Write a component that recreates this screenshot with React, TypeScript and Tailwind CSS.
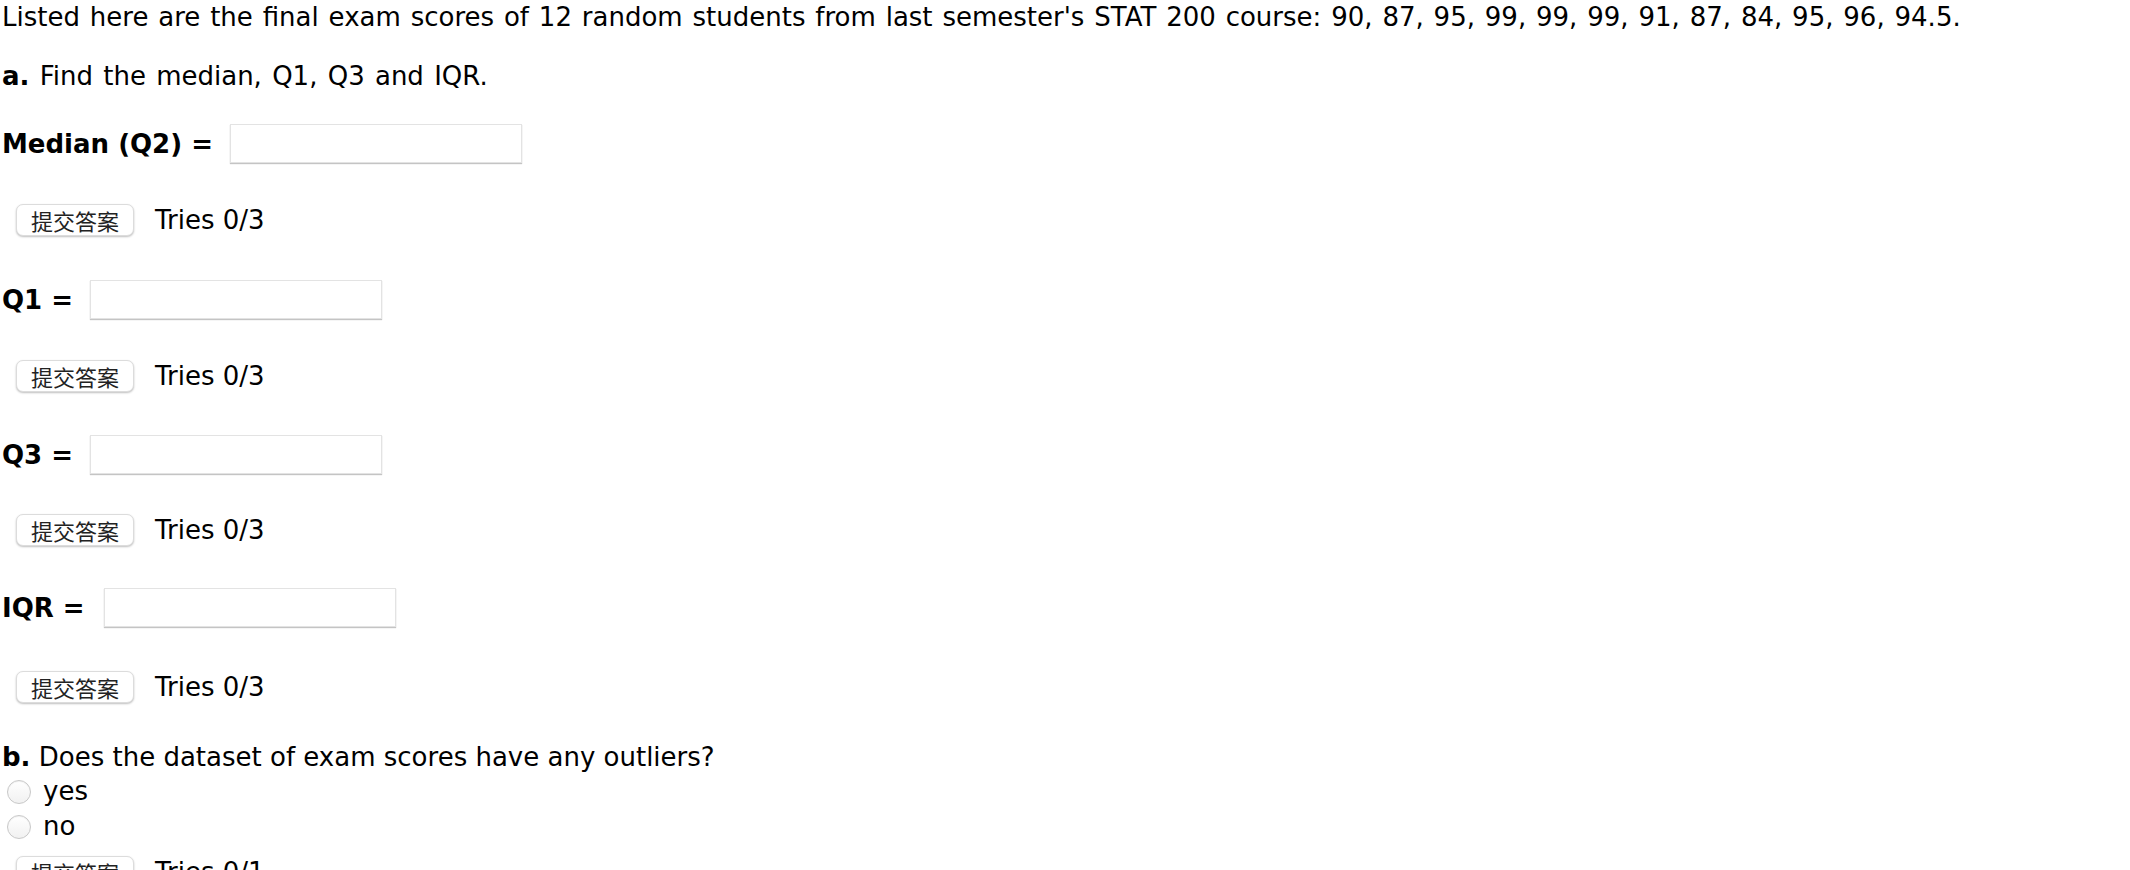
import React from 'react';

const inputCls =
  'h-[39px] w-[292px] border border-[#e3e3e3] bg-white shadow-[0_1px_1px_#c4c4c4] outline-none';

function SubmitRow({ tries }: { tries: string }) {
  return (
    <div className="flex items-center h-[32px]">
      <button className="ml-[14px] h-[32px] w-[118px] rounded-[7px] border border-[#dcdcdc] bg-white shadow-[0_1px_2px_rgba(0,0,0,0.25)] text-[22px] leading-none text-[#222] font-['Noto_Sans_CJK_SC',sans-serif]">
        提交答案
      </button>
      <span className="ml-[21px] leading-[30px]">{tries}</span>
    </div>
  );
}

function AnswerRow({ label, gap }: { label: string; gap: string }) {
  return (
    <div className="flex items-center h-[39px]">
      <span className="font-bold leading-[30px]">{label}</span>
      <input type="text" className={`${gap} ${inputCls}`} />
    </div>
  );
}

function Radio({ label }: { label: string }) {
  return (
    <label className="flex items-center h-[35px]">
      <span className="ml-[5px] h-[24px] w-[24px] rounded-full border border-[#c8c8c8] bg-gradient-to-b from-white to-[#f1f1f1] shadow-[inset_0_1px_1px_rgba(0,0,0,0.06)]" />
      <span className="ml-[12px] leading-[35px]">{label}</span>
    </label>
  );
}

export default function App() {
  return (
    <div className="min-h-screen bg-white pl-[2px] text-[26px] text-black font-['DejaVu_Sans','Noto_Sans_CJK_SC',sans-serif]">
      <p className="pt-[2px] leading-[30px] [word-spacing:1.6px]">
        Listed here are the final exam scores of 12 random students from last semester's STAT 200 course: 90, 87, 95, 99, 99, 99, 91, 87, 84, 95, 96, 94.5.
      </p>
      <p className="mt-[29px] leading-[30px] [word-spacing:2px]">
        <b>a.</b> Find the median, Q1, Q3 and IQR.
      </p>

      <div className="mt-[33px]">
        <AnswerRow label="Median (Q2) =" gap="ml-[17px]" />
      </div>
      <div className="mt-[41px]">
        <SubmitRow tries="Tries 0/3" />
      </div>

      <div className="mt-[44px]">
        <AnswerRow label="Q1 =" gap="ml-[17px]" />
      </div>
      <div className="mt-[41px]">
        <SubmitRow tries="Tries 0/3" />
      </div>

      <div className="mt-[43px]">
        <AnswerRow label="Q3 =" gap="ml-[17px]" />
      </div>
      <div className="mt-[40px]">
        <SubmitRow tries="Tries 0/3" />
      </div>

      <div className="mt-[42px]">
        <AnswerRow label="IQR =" gap="ml-[19px]" />
      </div>
      <div className="mt-[44px]">
        <SubmitRow tries="Tries 0/3" />
      </div>

      <p className="mt-[39px] leading-[30px]">
        <b>b.</b> Does the dataset of exam scores have any outliers?
      </p>
      <div className="mt-[2px]">
        <Radio label="yes" />
        <Radio label="no" />
      </div>
      <div className="mt-[12px]">
        <SubmitRow tries="Tries 0/1" />
      </div>
    </div>
  );
}
